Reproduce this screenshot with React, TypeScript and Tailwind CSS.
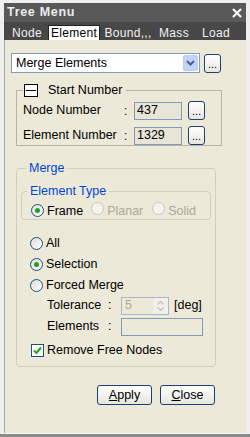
import React from "react";

const font = { fontFamily: '"Liberation Sans", Arial, sans-serif' };

function Radio({ checked, disabled }: { checked?: boolean; disabled?: boolean }) {
  return (
    <span
      className={`inline-flex items-center justify-center w-[13px] h-[13px] rounded-full border ${
        disabled ? "border-[#cac8bb] bg-[#f4f3ee]" : "border-[#1c5180] bg-gradient-to-br from-[#dcdcd6] to-white"
      }`}
    >
      {checked && <span className="w-[5px] h-[5px] rounded-full bg-[#21a121]" />}
    </span>
  );
}

function DotsBtn() {
  return (
    <div className="w-[17px] h-[19px] border border-[#1c3f74] rounded-[3px] bg-gradient-to-b from-white to-[#e6e5df] flex items-end justify-center pb-[2px] text-[11px] leading-none text-black">
      ...
    </div>
  );
}

export default function App() {
  return (
    <div style={font} className="w-[250px] h-[437px] bg-[#efefef] flex flex-col pt-[3px] pl-[4px] pr-[4px] text-[12px] text-black">
      {/* title */}
      <div className="h-[19px] bg-[#595959] flex items-center justify-between pl-[3px] pr-[4px]">
        <span className="font-bold text-[#ececec] text-[12.5px] tracking-[0.7px]">Tree Menu</span>
        <svg width="10" height="10" viewBox="0 0 10 10">
          <path d="M1 1L9 9M9 1L1 9" stroke="#ffffff" strokeWidth="2" />
        </svg>
      </div>
      {/* tabs */}
      <div className="h-[18px] bg-[#474747] flex items-end text-[12px] text-[#f2f2f2] tracking-[0.3px]">
        <div className="ml-[6px] w-[34px] h-[15px] flex items-center justify-center">Node</div>
        <div className="ml-[4px] w-[52px] h-[15px] bg-white text-black flex items-center justify-center border-t border-l border-r border-[#222]">Element</div>
        <div className="ml-[3px] w-[50px] h-[15px] flex items-center justify-center">Bound,,,</div>
        <div className="ml-[1px] w-[40px] h-[15px] flex items-center justify-center">Mass</div>
        <div className="ml-[5px] w-[34px] h-[15px] flex items-center justify-center">Load</div>
      </div>
      {/* body */}
      <div className="flex-1 bg-[#ece9d8] border-l border-[#a8a8a8] flex flex-col">
        <div className="mt-[13px] ml-[6px] flex items-center">
          <div className="w-[189px] h-[20px] border border-[#7f9db9] bg-white flex items-center justify-between pl-[4px] pr-[1px] text-[12.5px]">
            <span>Merge Elements</span>
            <div className="w-[15px] h-[16px] rounded-[2px] bg-[#c1d3fb] border border-[#b9cdf5] flex items-center justify-center">
              <svg width="9" height="6" viewBox="0 0 9 6">
                <path d="M1 1L4.5 4.5L8 1" stroke="#4d6185" strokeWidth="2" fill="none" />
              </svg>
            </div>
          </div>
          <div className="ml-[4px]">
            <DotsBtn />
          </div>
        </div>

        {/* Start Number */}
        <fieldset className="mt-[8px] ml-[11px] w-[206px] h-[65px] border border-[#b5b3a6] pl-[6px]">
          <legend className="ml-0 px-[1px] flex items-center">
            <span className="w-[14px] h-[13px] border border-black bg-white flex items-center justify-center">
              <span className="w-[10px] h-[1px] bg-black" />
            </span>
            <span className="ml-[10px] mr-[3px] text-[12.5px]">Start Number</span>
          </legend>
          <div className="flex items-center h-[20px] mt-[1px]">
            <span className="w-[101px] text-[12.5px]">Node Number</span>
            <span className="w-[10px]">:</span>
            <div className="w-[48px] h-[18px] border border-[#7f9db9] bg-[#e7e4d8] flex items-center pl-[2px] text-[12.5px]">437</div>
            <div className="ml-[6px]"><DotsBtn /></div>
          </div>
          <div className="flex items-center h-[20px] mt-[5px]">
            <span className="w-[101px] text-[12.5px]">Element Number</span>
            <span className="w-[10px]">:</span>
            <div className="w-[48px] h-[18px] border border-[#7f9db9] bg-[#e7e4d8] flex items-center pl-[2px] text-[12.5px]">1329</div>
            <div className="ml-[6px]"><DotsBtn /></div>
          </div>
        </fieldset>

        {/* Merge */}
        <fieldset className="mt-[13px] ml-[11px] w-[200px] h-[208px] border border-[#d0d0bf] rounded-[4px] px-[4px]">
          <legend className="ml-[5px] px-[3px] text-[#0046d5] text-[12.5px]">Merge</legend>
          <fieldset className="w-[190px] h-[38px] border border-[#d0d0bf] rounded-[4px] mt-[4px]">
            <legend className="ml-[5px] px-[3px] text-[#0046d5] text-[12.5px]">Element Type</legend>
            <div className="flex items-center ml-[9px] mt-[1px] text-[12.5px]">
              <Radio checked />
              <span className="ml-[3px]">Frame</span>
              <span className="ml-[8px]"><Radio disabled /></span>
              <span className="ml-[3px] text-[#aca899]">Planar</span>
              <span className="ml-[9px]"><Radio disabled /></span>
              <span className="ml-[3px] text-[#aca899]">Solid</span>
            </div>
          </fieldset>
          <div className="ml-[9px] mt-[17px] flex flex-col gap-[8px] text-[12.5px]">
            <div className="flex items-center h-[13px]"><Radio /><span className="ml-[3px]">All</span></div>
            <div className="flex items-center h-[13px]"><Radio checked /><span className="ml-[3px]">Selection</span></div>
            <div className="flex items-center h-[13px]"><Radio /><span className="ml-[3px]">Forced Merge</span></div>
          </div>
          <div className="ml-[26px] mt-[5px] flex items-center h-[18px] text-[12.5px]">
            <span className="w-[61px]">Tolerance</span>
            <span className="w-[13px]">:</span>
            <div className="w-[48px] h-[18px] border border-[#a7b8cd] bg-[#ece9d8] flex items-center justify-between pl-[3px] text-[#aca899]">
              <span>5</span>
              <div className="w-[15px] h-[16px] bg-[#f1f0ea] flex flex-col items-center justify-center gap-[2px]">
                <svg width="7" height="4" viewBox="0 0 7 4"><path d="M0.5 3.5L3.5 0.5L6.5 3.5" stroke="#c5c3b6" strokeWidth="1.4" fill="none" /></svg>
                <svg width="7" height="4" viewBox="0 0 7 4"><path d="M0.5 0.5L3.5 3.5L6.5 0.5" stroke="#c5c3b6" strokeWidth="1.4" fill="none" /></svg>
              </div>
            </div>
            <span className="ml-[5px]">[deg]</span>
          </div>
          <div className="ml-[26px] mt-[3px] flex items-center h-[18px] text-[12.5px]">
            <span className="w-[61px]">Elements</span>
            <span className="w-[13px]">:</span>
            <div className="w-[82px] h-[18px] border border-[#7f9db9] bg-[#ece9d8]" />
          </div>
          <div className="ml-[10px] mt-[5px] flex items-center text-[12.5px]">
            <span className="w-[13px] h-[13px] border border-[#1c5180] bg-white flex items-center justify-center">
              <svg width="9" height="9" viewBox="0 0 9 9">
                <path d="M1 4.5L3.5 7L8 1.5" stroke="#21a121" strokeWidth="2" fill="none" />
              </svg>
            </span>
            <span className="ml-[3px]">Remove Free Nodes</span>
          </div>
        </fieldset>

        <div className="mt-[18px] ml-[92px] flex gap-[8px] text-[12.5px]">
          <div className="w-[55px] h-[20px] border border-[#1c3f74] rounded-[3px] bg-gradient-to-b from-white to-[#e6e5df] flex items-center justify-center">
            <span><span className="underline">A</span>pply</span>
          </div>
          <div className="w-[55px] h-[20px] border border-[#1c3f74] rounded-[3px] bg-gradient-to-b from-white to-[#e6e5df] flex items-center justify-center">
            <span><span className="underline">C</span>lose</span>
          </div>
        </div>
      </div>
      <div className="h-[1px] bg-[#f8f8f8]" />
      <div className="h-[3px] bg-[#8a8a8a] -mx-[4px]" />
    </div>
  );
}
